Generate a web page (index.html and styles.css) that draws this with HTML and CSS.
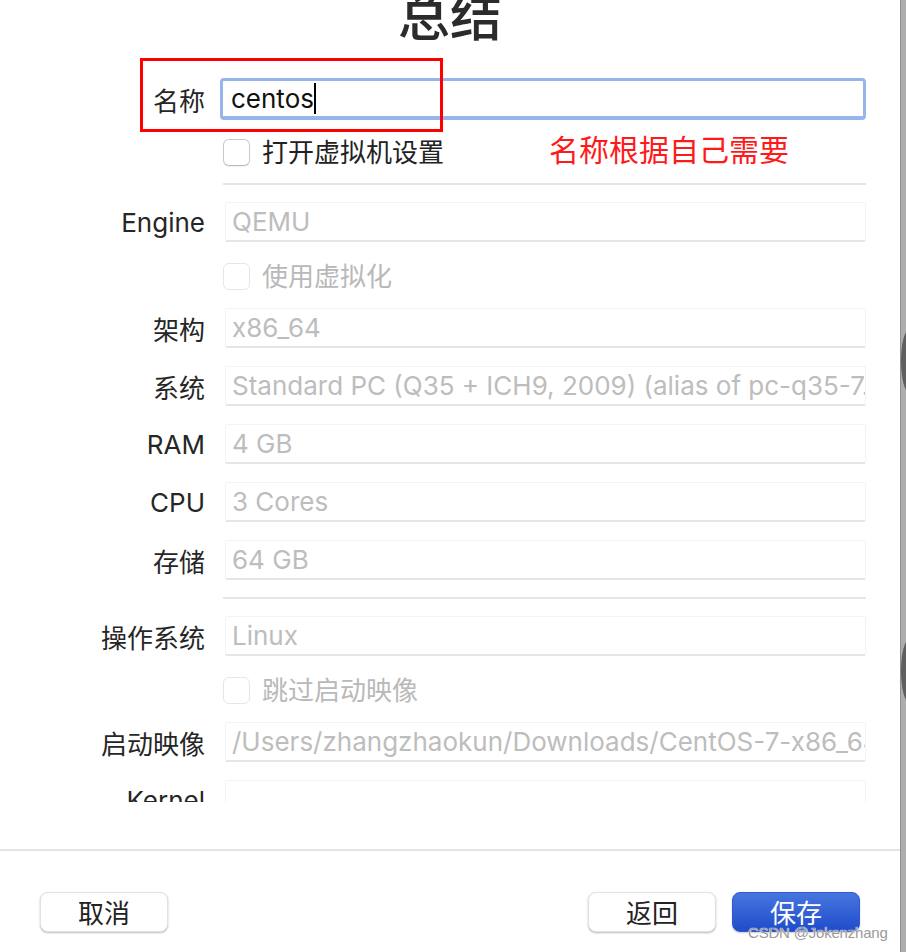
FILE: index.html
```html
<!DOCTYPE html>
<html lang="zh-CN">
<head>
<meta charset="utf-8">
<title>总结</title>
<link rel="stylesheet" href="styles.css">
</head>
<body>
<div class="screen">
  <div class="window">
    <div class="scroll">
      <h1 class="title">总结</h1>
      <div class="form">
        <div class="row row-name">
          <div class="label">名称</div>
          <div class="name-input">centos<span class="caret"></span></div>
        </div>
        <div class="row row-check mt19">
          <div class="label"></div>
          <div class="check"><span class="box"></span><span class="check-text">打开虚拟机设置</span></div>
        </div>
        <div class="sep mt17"></div>
        <div class="row row-field mt17">
          <div class="label">Engine</div>
          <div class="field">QEMU</div>
        </div>
        <div class="row row-check mt21">
          <div class="label"></div>
          <div class="check disabled"><span class="box"></span><span class="check-text">使用虚拟化</span></div>
        </div>
        <div class="row row-field mt18">
          <div class="label">架构</div>
          <div class="field">x86_64</div>
        </div>
        <div class="row row-field mt18">
          <div class="label">系统</div>
          <div class="field">Standard PC (Q35 + ICH9, 2009) (alias of pc-q35-7.1)</div>
        </div>
        <div class="row row-field mt18">
          <div class="label">RAM</div>
          <div class="field">4 GB</div>
        </div>
        <div class="row row-field mt18">
          <div class="label">CPU</div>
          <div class="field">3 Cores</div>
        </div>
        <div class="row row-field mt18">
          <div class="label">存储</div>
          <div class="field">64 GB</div>
        </div>
        <div class="sep mt17"></div>
        <div class="row row-field mt17">
          <div class="label">操作系统</div>
          <div class="field">Linux</div>
        </div>
        <div class="row row-check mt21">
          <div class="label"></div>
          <div class="check disabled"><span class="box"></span><span class="check-text">跳过启动映像</span></div>
        </div>
        <div class="row row-field mt18">
          <div class="label">启动映像</div>
          <div class="field">/Users/zhangzhaokun/Downloads/CentOS-7-x86_64-DVD-2009.iso</div>
        </div>
        <div class="row row-field mt18">
          <div class="label">Kernel</div>
          <div class="field"></div>
        </div>
      </div>
      <div class="annot-box"></div>
      <div class="annot-text">名称根据自己需要</div>
    </div>
    <div class="footer">
      <div class="footer-sep"></div>
      <div class="buttons">
        <button class="btn">取消</button>
        <div class="btn-group">
          <button class="btn">返回</button>
          <button class="btn btn-primary">保存</button>
        </div>
      </div>
    </div>
    <div class="watermark">CSDN @Jokenzhang</div>
  </div>
  <div class="strip">
    <span class="knob knob1"></span>
    <span class="knob knob2"></span>
  </div>
</div>
</body>
</html>
```

FILE: styles.css
```css
html, body {
  margin: 0;
  padding: 0;
  background: #ffffff;
}
body {
  font-family: Inter, "Noto Sans CJK SC", "Noto Sans", sans-serif;
  color: #262626;
}
.screen {
  display: flex;
  width: 906px;
  height: 952px;
  overflow: hidden;
}
.window {
  position: relative;
  width: 900px;
  height: 952px;
  background: #ffffff;
  display: flex;
  flex-direction: column;
}
.scroll {
  position: relative;
  height: 802px;
  overflow: hidden;
  flex: none;
}
.title {
  margin: -12px 0 0 0;
  height: 52px;
  line-height: 52px;
  font-size: 52px;
  font-weight: 500;
  text-align: center;
  color: #2b2b2b;
  font-family: "Noto Sans CJK SC", sans-serif;
}
.form {
  display: flex;
  flex-direction: column;
  padding-right: 34px;
}
.row {
  display: flex;
  align-items: center;
  font-size: 26px;
}
.label {
  width: 205px;
  flex: none;
  text-align: right;
  margin-right: 20px;
  color: #262626;
  white-space: nowrap;
}
.row-name {
  margin-top: 38px;
  height: 42px;
}
.row-field {
  height: 40px;
}
.row-check {
  height: 27px;
}
.mt17 { margin-top: 17px; }
.mt18 { margin-top: 18px; }
.mt19 { margin-top: 19px; }
.mt21 { margin-top: 21px; }

.name-input {
  flex: 1;
  height: 42px;
  box-sizing: border-box;
  margin-left: -5px;
  border: 3px solid #98b5eb;
  border-bottom-width: 4px;
  border-radius: 4px;
  padding-left: 8px;
  display: flex;
  align-items: center;
  color: #111;
  font-size: 26px;
}
.caret {
  display: inline-block;
  width: 2px;
  height: 31px;
  background: #000;
  margin-left: 0;
}
.field {
  flex: 1;
  height: 40px;
  box-sizing: border-box;
  border: 1px solid #f3f3f3;
  border-bottom: 2px solid #e6e6e6;
  border-radius: 2px;
  padding-left: 6px;
  line-height: 37px;
  color: #bdbdbd;
  white-space: nowrap;
  overflow: hidden;
  min-width: 0;
}
.check {
  display: flex;
  align-items: center;
  margin-left: -2px;
}
.box {
  width: 27px;
  height: 27px;
  box-sizing: border-box;
  border: 1px solid #c9c9c9;
  border-bottom-color: #bdbdbd;
  border-radius: 6px;
  background: #fff;
  box-shadow: 0 1px 1px rgba(0, 0, 0, 0.06);
}
.check-text {
  margin-left: 12px;
  color: #222;
  line-height: 27px;
}
.check.disabled .box {
  border-color: #e6e6e6;
  box-shadow: none;
}
.check.disabled .check-text {
  color: #b9b9b9;
}
.sep {
  height: 2px;
  background: #e6e6e6;
  margin-left: 223px;
}
.annot-box {
  position: absolute;
  left: 140px;
  top: 58px;
  width: 303px;
  height: 74px;
  box-sizing: border-box;
  border: 3px solid #ff0000;
}
.annot-text {
  position: absolute;
  left: 549px;
  top: 132px;
  font-size: 30px;
  line-height: 32px;
  color: #ff1a1a;
  font-family: "Noto Sans CJK SC", sans-serif;
}
.footer {
  display: flex;
  flex-direction: column;
}
.footer-sep {
  margin-top: 47px;
  height: 2px;
  background: #e4e4e4;
}
.buttons {
  margin-top: 41px;
  display: flex;
  justify-content: space-between;
  padding: 0 40px;
}
.btn-group {
  display: flex;
  gap: 16px;
}
.btn {
  width: 128px;
  height: 40px;
  box-sizing: border-box;
  border: 1px solid #e2e2e2;
  border-radius: 8px;
  background: #ffffff;
  box-shadow: 0 1px 2px rgba(0, 0, 0, 0.28);
  font-family: "Noto Sans CJK SC", sans-serif;
  font-size: 26px;
  line-height: 36px;
  color: #222;
  padding: 0;
}
.btn-primary {
  background: linear-gradient(#4776de, #1f4ccb);
  border-color: #2d58cf;
  color: #ffffff;
  box-shadow: 0 1px 2px rgba(0, 0, 0, 0.2);
}
.watermark {
  position: absolute;
  left: 748px;
  top: 924px;
  font-family: "Liberation Sans", sans-serif;
  font-size: 15px;
  letter-spacing: -0.2px;
  color: #9a9a9a;
  text-shadow: 0 0 1px #ffffff, 0 0 1px #ffffff;
  white-space: nowrap;
}
.strip {
  position: relative;
  width: 6px;
  height: 952px;
  background: #adadad;
  border-left: 1px solid #8f8f8f;
  box-sizing: border-box;
  overflow: hidden;
  flex: none;
}
.knob {
  position: absolute;
  left: 0;
  width: 16px;
  height: 62px;
  border-radius: 50%;
  background: #5f5f5f;
}
.knob1 { top: 330px; }
.knob2 { top: 640px; }
```
